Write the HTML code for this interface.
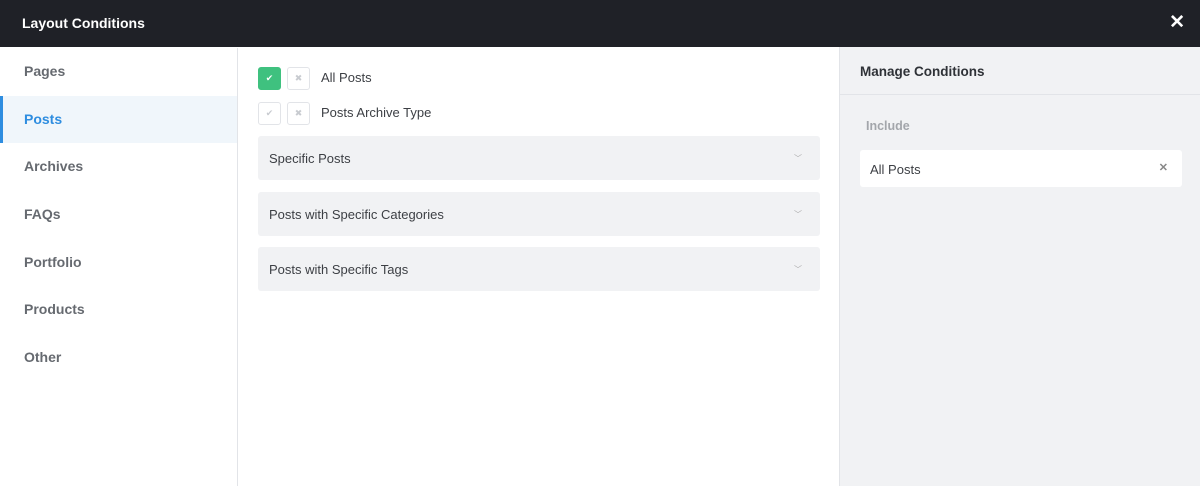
<!DOCTYPE html>
<html><head><style>
*{box-sizing:border-box;margin:0;padding:0}
body{width:1200px;height:486px;overflow:hidden;font-family:"Liberation Sans",sans-serif;background:#fff;position:relative}
.hd{position:absolute;left:0;top:0;width:1200px;height:47px;background:#1f2127;color:#fff}
.hd .t{position:absolute;left:22px;top:15px;font-size:14px;font-weight:bold}
.hd .x{position:absolute;right:15px;top:11px;font-size:19px;font-weight:bold}
.sb{position:absolute;left:0;top:48px;width:238px;height:438px;border-right:1px solid #e2e4e8}
.sb div{height:47.7px;line-height:47.7px;padding-left:24px;font-size:14px;font-weight:bold;color:#666a70}
.sb .a{background:#f0f6fb;color:#2e8de0;border-left:3px solid #2e8de0;padding-left:21px}
.mid{position:absolute;left:239px;top:47px;width:600px;height:439px}
.row{position:absolute;left:19px;height:23px}
.bx{position:absolute;top:0;width:23px;height:23px;border:1px solid #e2e4e8;border-radius:3px;background:#fff;text-align:center;line-height:21px;font-size:9px;color:#c8cbd0}
.lbl{position:absolute;left:63px;top:3px;font-size:13px;color:#3c3f44;white-space:nowrap}
.acc{position:absolute;left:19px;width:562px;height:44px;background:#f1f2f4;border-radius:3px;font-size:13px;color:#3c3f44;padding:15px 11px}
.acc span{position:absolute;right:18px;top:17px;font-size:8px;color:#aaa}
.rp{position:absolute;left:839px;top:47px;width:361px;height:439px;background:#f1f2f4;border-left:1px solid #e2e4e8}
.rp .h{height:48px;border-bottom:1px solid #e2e4e8;padding:17px 20px;font-size:13.5px;font-weight:bold;color:#2f3237}
.rp .inc{position:absolute;left:26px;top:72px;font-size:12.5px;font-weight:bold;color:#a3a6ab}
.rp .it{position:absolute;left:20px;top:103px;width:322px;height:37px;background:#fff;border-radius:3px;padding:12px 10px;font-size:13px;color:#3c3f44}
.rp .it span{position:absolute;right:14px;top:11px;font-size:11px;color:#888;font-weight:bold}
</style></head><body>
<div class="hd"><div class="t">Layout Conditions</div><div class="x">✕</div></div>
<div class="sb"><div>Pages</div><div class="a">Posts</div><div>Archives</div><div>FAQs</div><div>Portfolio</div><div>Products</div><div>Other</div></div>
<div class="mid">
<div class="row" style="top:20px"><div class="bx" style="left:0;background:#3fc17f;border-color:#3fc17f;color:#fff">✔</div><div class="bx" style="left:29px">✖</div><div class="lbl">All Posts</div></div>
<div class="row" style="top:55px"><div class="bx" style="left:0">✔</div><div class="bx" style="left:29px">✖</div><div class="lbl">Posts Archive Type</div></div>
<div class="acc" style="top:89px">Specific Posts<span>﹀</span></div>
<div class="acc" style="top:145px">Posts with Specific Categories<span>﹀</span></div>
<div class="acc" style="top:200px">Posts with Specific Tags<span>﹀</span></div>
</div>
<div class="rp"><div class="h">Manage Conditions</div><div class="inc">Include</div><div class="it">All Posts<span>✕</span></div></div>
</body></html>
